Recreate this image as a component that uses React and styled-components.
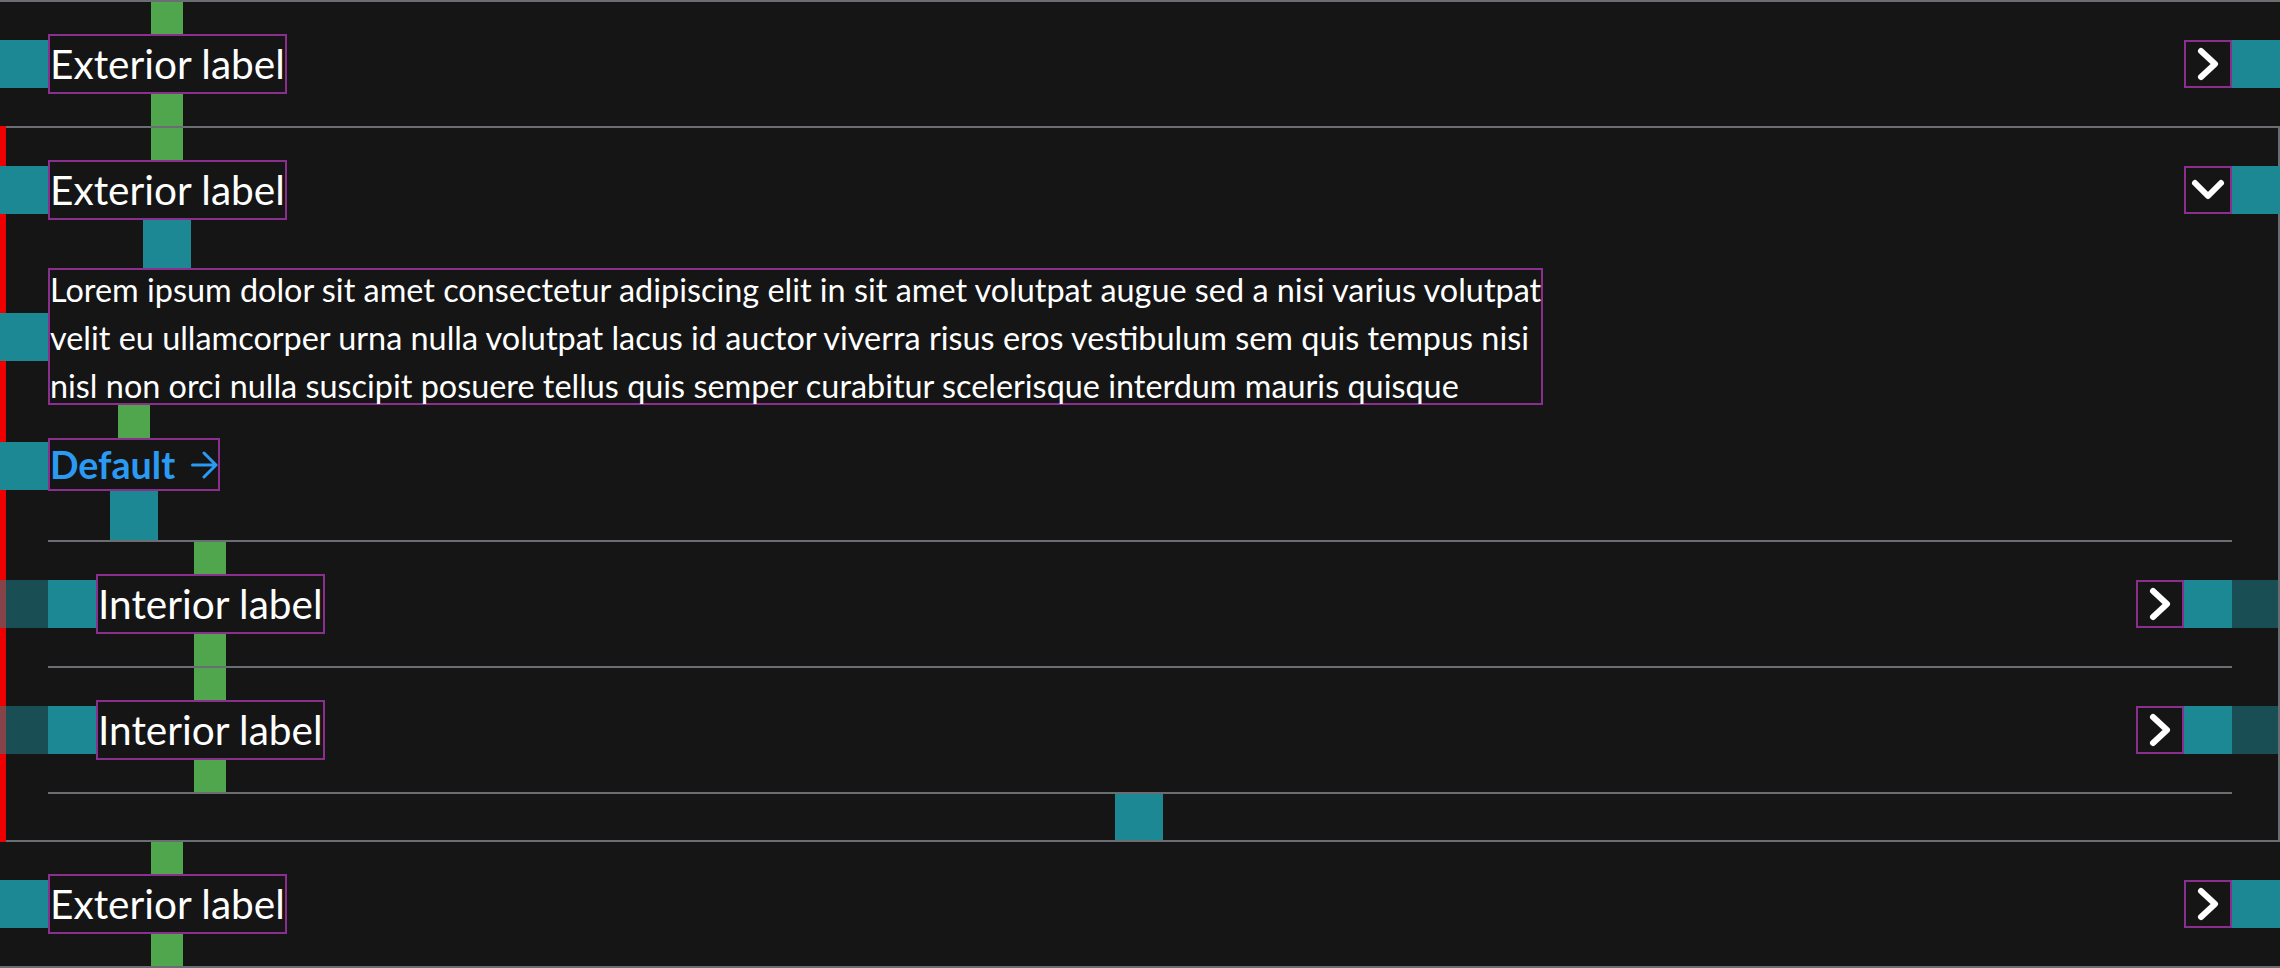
import React from "react";
import styled, { createGlobalStyle } from "styled-components";

const GRAY = "#6a6e73";
const TEAL = "#1b8894";
const TEAL_DIM = "rgba(27, 136, 148, 0.5)";
const GREEN = "#50a64c";
const PURPLE = "#8b2f8f";

const GlobalStyle = createGlobalStyle`
  html, body {
    margin: 0;
    padding: 0;
    background: #151515;
  }
`;

const Page = styled.div`
  width: 2280px;
  background: #151515;
  border-top: 2px solid ${GRAY};
  border-bottom: 2px solid ${GRAY};
  font-family: "Lato", "Noto Sans", sans-serif;
  color: #fff;
`;

const Row = styled.div`
  display: flex;
  align-items: flex-start;
`;

const Fill = styled.div`
  flex: 1;
`;

const Stack = styled.div`
  display: flex;
  flex-direction: column;
  align-items: center;
  flex: none;
`;

// spacer boxes (teal = 48px spacing, green = 32px spacing)
const Teal = styled.div`
  flex: none;
  width: ${(p) => p.$w || 48}px;
  height: ${(p) => p.$h || 48}px;
  margin-top: ${(p) => p.$top || 0}px;
  margin-right: ${(p) => p.$right || 0}px;
  background: ${(p) => (p.$dim ? TEAL_DIM : TEAL)};
`;

const Green = styled.div`
  flex: none;
  width: 32px;
  height: ${(p) => p.$h || 32}px;
  background: ${GREEN};
`;

const Label = styled.div`
  border: 2px solid ${PURPLE};
  font-size: 40.6px;
  line-height: 56px;
  white-space: nowrap;
`;

const ToggleBox = styled.div`
  flex: none;
  box-sizing: border-box;
  width: 48px;
  height: 48px;
  margin-top: 38px;
  border: 2px solid ${PURPLE};

  svg {
    display: block;
  }
`;

const Item = styled.div`
  position: relative;
  z-index: 0;
  border-top: 2px solid ${GRAY};
  border-right: 2px solid ${GRAY};
  border-bottom: 2px solid ${GRAY};

  /* red expanded marker, sits under the spacer boxes */
  &::before {
    content: "";
    position: absolute;
    z-index: -1;
    left: 0;
    top: -2px;
    bottom: -2px;
    width: 6px;
    background: #ee0000;
  }
`;

const ContentLine = styled.div`
  display: flex;
  align-items: ${(p) => (p.$start ? "flex-start" : "center")};
`;

const TextBox = styled.div`
  box-sizing: border-box;
  height: 137px;
  border: 2px solid ${PURPLE};
  font-size: 32.4px;
  white-space: nowrap;

  p {
    margin: -4px 0 0;
    line-height: 48px;
  }
`;

const LinkBox = styled.div`
  display: flex;
  align-items: center;
  gap: 16px;
  border: 2px solid ${PURPLE};
  color: #2b9af3;
  font-size: 37.6px;
  font-weight: 700;
  line-height: 49px;

  svg {
    display: block;
  }
`;

const Divider = styled.div`
  height: 2px;
  margin: 0 46px 0 48px;
  background: ${GRAY};
`;

const BottomPad = styled.div`
  display: flex;
  justify-content: center;
`;

function Chevron({ down }) {
  return (
    <svg width="44" height="44" viewBox="0 0 44 44">
      <polyline
        points={down ? "9,15 22,28 35,15" : "15,9 29,22 15,35"}
        fill="none"
        stroke="#fff"
        strokeWidth="6"
        strokeLinecap="round"
        strokeLinejoin="round"
      />
    </svg>
  );
}

function Arrow() {
  return (
    <svg width="27" height="28" viewBox="0 0 27 28">
      <path
        d="M1.5 14H25M13 2l12 12-12 12"
        fill="none"
        stroke="#2b9af3"
        strokeWidth="3"
        strokeLinecap="round"
        strokeLinejoin="round"
      />
    </svg>
  );
}

function ExteriorRow({ label }) {
  return (
    <Row>
      <Teal $top={38} />
      <Stack>
        <Green />
        <Label>{label}</Label>
        <Green />
      </Stack>
      <Fill />
      <ToggleBox>
        <Chevron />
      </ToggleBox>
      <Teal $top={38} />
    </Row>
  );
}

function InteriorRow({ label }) {
  return (
    <Row>
      <Teal $top={38} $dim />
      <Teal $top={38} />
      <Stack>
        <Green />
        <Label>{label}</Label>
        <Green />
      </Stack>
      <Fill />
      <ToggleBox>
        <Chevron />
      </ToggleBox>
      <Teal $top={38} />
      <Teal $top={38} $w={46} $dim />
    </Row>
  );
}

export default function App() {
  return (
    <>
      <GlobalStyle />
      <Page>
        <ExteriorRow label="Exterior label" />
        <Item>
          <Row>
            <Teal $top={38} />
            <Stack>
              <Green />
              <Label>Exterior label</Label>
              <Teal />
            </Stack>
            <Fill />
            <ToggleBox>
              <Chevron down />
            </ToggleBox>
            <Teal $top={38} $right={-2} />
          </Row>
          <ContentLine>
            <Teal />
            <TextBox>
              <p>
                Lorem ipsum dolor sit amet consectetur adipiscing elit in sit amet volutpat augue sed a nisi varius volutpat
                <br />
                velit eu ullamcorper urna nulla volutpat lacus id auctor viverra risus eros vestibulum sem quis tempus nisi
                <br />
                nisl non orci nulla suscipit posuere tellus quis semper curabitur scelerisque interdum mauris quisque
              </p>
            </TextBox>
          </ContentLine>
          <ContentLine $start>
            <Teal $top={37} />
            <Stack>
              <Green $h={33} />
              <LinkBox>
                Default
                <Arrow />
              </LinkBox>
              <Teal $h={49} />
            </Stack>
          </ContentLine>
          <Divider />
          <InteriorRow label="Interior label" />
          <Divider />
          <InteriorRow label="Interior label" />
          <Divider />
          <BottomPad>
            <Teal $h={46} />
          </BottomPad>
        </Item>
        <ExteriorRow label="Exterior label" />
      </Page>
    </>
  );
}
